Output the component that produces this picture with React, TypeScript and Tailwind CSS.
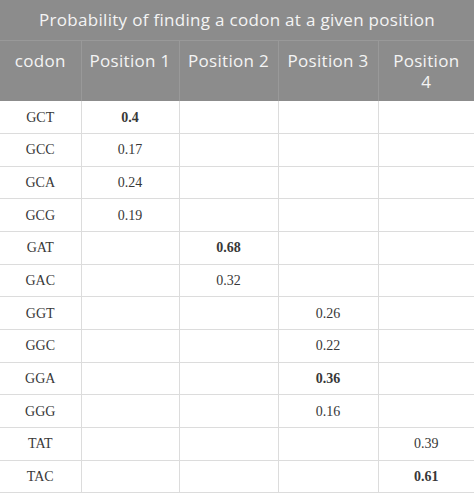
import React from 'react';

type Row = { codon: string; values: (string | null)[]; bold: number };

const rows: Row[] = [
  { codon: 'GCT', values: ['0.4', null, null, null], bold: 0 },
  { codon: 'GCC', values: ['0.17', null, null, null], bold: -1 },
  { codon: 'GCA', values: ['0.24', null, null, null], bold: -1 },
  { codon: 'GCG', values: ['0.19', null, null, null], bold: -1 },
  { codon: 'GAT', values: [null, '0.68', null, null], bold: 1 },
  { codon: 'GAC', values: [null, '0.32', null, null], bold: -1 },
  { codon: 'GGT', values: [null, null, '0.26', null], bold: -1 },
  { codon: 'GGC', values: [null, null, '0.22', null], bold: -1 },
  { codon: 'GGA', values: [null, null, '0.36', null], bold: 2 },
  { codon: 'GGG', values: [null, null, '0.16', null], bold: -1 },
  { codon: 'TAT', values: [null, null, null, '0.39'], bold: -1 },
  { codon: 'TAC', values: [null, null, null, '0.61'], bold: 3 },
];

const headers = ['Position 1', 'Position 2', 'Position 3'];

export default function App() {
  return (
    <div className="w-[474px] h-[494px] overflow-hidden bg-white">
      <table className="w-[474px] table-fixed border-collapse">
        <colgroup>
          <col className="w-[81px]" />
          <col className="w-[98px]" />
          <col className="w-[99px]" />
          <col className="w-[100px]" />
          <col className="w-[96px]" />
        </colgroup>
        <thead className="bg-[#8c8c8c] text-[#f4f4f4] font-['Open_Sans',sans-serif] text-[17px] tracking-[0.3px]">
          <tr className="h-[40px]">
            <th colSpan={5} className="font-normal text-center align-middle border-b border-[#999999]">
              Probability of finding a codon at a given position
            </th>
          </tr>
          <tr className="h-[61px]">
            <th className="font-normal align-top pt-[9px] leading-[21px] border-r border-[#999999]">codon</th>
            {headers.map((h) => (
              <th key={h} className="font-normal align-top pt-[9px] leading-[21px] border-r border-[#999999] whitespace-nowrap">
                {h}
              </th>
            ))}
            <th className="font-normal align-top pt-[9px] leading-[21px]">
              Position
              <br />4
            </th>
          </tr>
        </thead>
        <tbody className="font-['Liberation_Serif',serif] text-[14px] text-[#383838]">
          {rows.map((r) => (
            <tr key={r.codon} className="h-[32.67px]">
              <td className="text-center border-r border-b border-[#dcdcdc]">{r.codon}</td>
              {r.values.map((v, i) => (
                <td
                  key={i}
                  className={`text-center border-b border-[#dcdcdc] ${i < 3 ? 'border-r' : ''} ${
                    r.bold === i ? 'font-bold' : ''
                  }`}
                >
                  {v}
                </td>
              ))}
            </tr>
          ))}
        </tbody>
      </table>
    </div>
  );
}
